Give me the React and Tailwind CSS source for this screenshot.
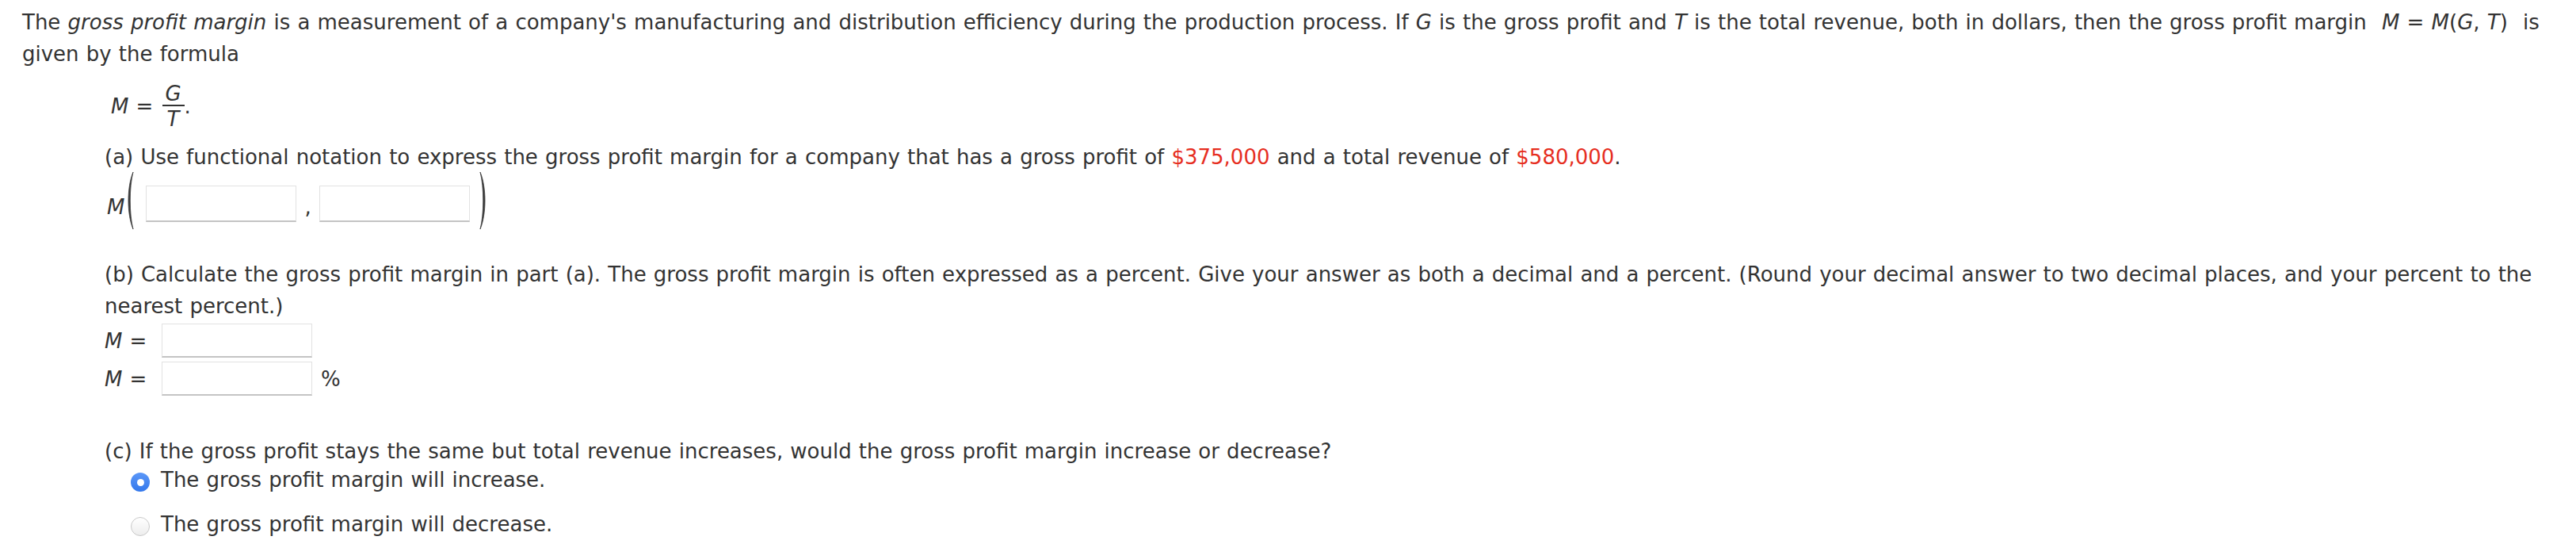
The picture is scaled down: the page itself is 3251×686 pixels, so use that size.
import React from 'react';

const Num = ({ children }) => <span className="text-[#e62e1f]">{children}</span>;

const AnswerBox = ({ h = 'h-[46px]' }) => (
    <div className={`w-[190px] ${h} bg-white border border-[#e2e2e2] border-b-2 border-b-[#c4c4c4]`} />
);

const Paren = ({ right }) => (
    <svg width="14" height="74" viewBox="0 0 14 74" className="shrink-0">
        {right ? (
            <path d="M3 1 C11 20 11 54 3 73 C8 54 8 20 3 1 Z" fill="#3a3a3a" stroke="#3a3a3a" strokeWidth="0.8" />
        ) : (
            <path d="M11 1 C3 20 3 54 11 73 C6 54 6 20 11 1 Z" fill="#3a3a3a" stroke="#3a3a3a" strokeWidth="0.8" />
        )}
    </svg>
);

const Radio = ({ checked }) =>
    checked ? (
        <span className="mt-[7px] w-[24px] h-[24px] rounded-full bg-gradient-to-b from-[#5b97f8] to-[#3378ec] flex items-center justify-center shrink-0">
            <span className="w-[9px] h-[9px] rounded-full bg-white" />
        </span>
    ) : (
        <span className="mt-[7px] w-[24px] h-[24px] rounded-full border border-[#c9c9c9] bg-gradient-to-b from-white to-[#ededed] shrink-0" />
    );

export default function App() {
    return (
        <div className="w-[3251px] h-[686px] overflow-hidden bg-white text-[#333] font-['DejaVu_Sans',Verdana,sans-serif] text-[26px] leading-[40px] [word-spacing:0.9px] pl-[28px] pt-[8px]">
            <p className="whitespace-nowrap">
                The <i>gross profit margin</i> is a measurement of a company's manufacturing and distribution efficiency during the production process. If <i>G</i> is the gross profit and <i>T</i> is the total revenue, both in dollars, then the gross profit margin{' '}
                <span className="mx-[10px]"><i>M</i> = <i>M</i>(<i>G</i>, <i>T</i>)</span> is
                <br />
                given by the formula
            </p>

            {/* formula */}
            <div className="ml-[112px] mt-[17px] flex items-center">
                <span className="whitespace-pre"><i>M</i> = </span>
                <span className="ml-[2px] flex flex-col items-center w-[28px] leading-[26px]">
                    <i>G</i>
                    <span className="mt-[1px] w-[28px] h-[2px] bg-[#333]" />
                    <i className="mt-[3px]">T</i>
                </span>
                <span>.</span>
            </div>

            <div className="ml-[104px]">
                {/* part a */}
                <p className="mt-[15px] whitespace-nowrap">
                    (a) Use functional notation to express the gross profit margin for a company that has a gross profit of <Num>$375,000</Num> and a total revenue of <Num>$580,000</Num>.
                </p>
                <div className="-mt-[2px] flex items-start">
                    <i className="mt-[25px] ml-[3px]">M</i>
                    <Paren />
                    <div className="mt-[18px] ml-[13px]"><AnswerBox /></div>
                    <span className="mt-[25px] mx-[10px]">,</span>
                    <div className="mt-[18px]"><AnswerBox /></div>
                    <div className="ml-[10px]"><Paren right /></div>
                </div>

                {/* part b */}
                <p className="mt-[36px] whitespace-nowrap">
                    (b) Calculate the gross profit margin in part (a). The gross profit margin is often expressed as a percent. Give your answer as both a decimal and a percent. (Round your decimal answer to two decimal places, and your percent to the
                    <br />
                    nearest percent.)
                </p>
                <div className="mt-[2px] flex flex-col gap-[5px]">
                    <div className="flex items-center">
                        <span className="w-[72px] whitespace-pre"><i>M</i> = </span>
                        <AnswerBox h="h-[43px]" />
                    </div>
                    <div className="flex items-center">
                        <span className="w-[72px] whitespace-pre"><i>M</i> = </span>
                        <AnswerBox h="h-[43px]" />
                        <span className="ml-[11px]">%</span>
                    </div>
                </div>

                {/* part c */}
                <p className="mt-[50px] whitespace-nowrap">
                    (c) If the gross profit stays the same but total revenue increases, would the gross profit margin increase or decrease?
                </p>
                <div className="ml-[33px] leading-[32px]">
                    <label className="flex items-start gap-[14px]">
                        <Radio checked />
                        <span>The gross profit margin will increase.</span>
                    </label>
                    <label className="mt-[24px] flex items-start gap-[14px]">
                        <Radio />
                        <span>The gross profit margin will decrease.</span>
                    </label>
                </div>
            </div>
        </div>
    );
}
